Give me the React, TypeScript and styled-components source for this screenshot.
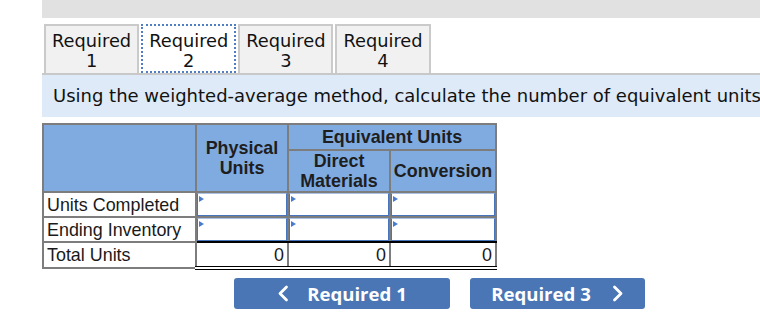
import React from "react";
import styled, { createGlobalStyle, css } from "styled-components";

const GlobalStyle = createGlobalStyle`
  html, body {
    margin: 0;
    padding: 0;
    background: #ffffff;
    overflow: hidden;
  }
`;

const tabs = ["1", "2", "3", "4"];

const rows = [
  { label: "Units Completed", kind: "input" as const },
  { label: "Ending Inventory", kind: "input" as const, beforeTotal: true },
  { label: "Total Units", kind: "total" as const },
];

const ChevronLeft = () => (
  <svg width="12" height="17" viewBox="0 0 12 17">
    <path d="M9.5 2 L3 8.5 L9.5 15" fill="none" stroke="#fff" strokeWidth="2.8" strokeLinecap="round" strokeLinejoin="round" />
  </svg>
);

const ChevronRight = () => (
  <svg width="12" height="17" viewBox="0 0 12 17">
    <path d="M2.5 2 L9 8.5 L2.5 15" fill="none" stroke="#fff" strokeWidth="2.8" strokeLinecap="round" strokeLinejoin="round" />
  </svg>
);

const App = () => {
  return (
    <>
      <GlobalStyle />
      <Page>
        <TopBar />
        <TabList>
          {tabs.map((n) => (
            <Tab key={n} $active={n === "2"}>
              Required
              <br />
              {n}
            </Tab>
          ))}
        </TabList>
        <Instruction>Using the weighted-average method, calculate the number of equivalent units</Instruction>
        <Table>
          <colgroup>
            <col style={{ width: 153 }} />
            <col style={{ width: 92 }} />
            <col style={{ width: 102 }} />
            <col style={{ width: 106 }} />
          </colgroup>
          <thead>
            <tr>
              <HeadCell rowSpan={2} />
              <HeadCell rowSpan={2}>
                Physical
                <br />
                Units
              </HeadCell>
              <HeadCell colSpan={2} $short>
                Equivalent Units
              </HeadCell>
            </tr>
            <tr>
              <HeadCell>
                Direct
                <br />
                Materials
              </HeadCell>
              <HeadCell>Conversion</HeadCell>
            </tr>
          </thead>
          <tbody>
            {rows.map((row) => (
              <tr key={row.label}>
                <LabelCell>{row.label}</LabelCell>
                {[0, 1, 2].map((i) =>
                  row.kind === "input" ? (
                    <InputCell key={i} $beforeTotal={!!row.beforeTotal}>
                      <Entry />
                    </InputCell>
                  ) : (
                    <TotalCell key={i}>0</TotalCell>
                  )
                )}
              </tr>
            ))}
          </tbody>
        </Table>
        <Nav>
          <NavButton $width={216} $gap={18}>
            <ChevronLeft />
            <span>Required 1</span>
          </NavButton>
          <NavButton $width={175} $gap={21}>
            <span>Required 3</span>
            <ChevronRight />
          </NavButton>
        </Nav>
      </Page>
    </>
  );
};

export default App;

const Page = styled.div`
  margin-left: 42px;
  width: 795px;
`;

const TopBar = styled.div`
  height: 18px;
  background: #e1e1e1;
`;

const TabList = styled.div`
  display: flex;
  gap: 2px;
  margin-top: 6px;
  padding-left: 2px;
  border-bottom: 2px solid #c8c8c8;
`;

const Tab = styled.div<{ $active: boolean }>`
  box-sizing: border-box;
  height: 49px;
  padding: 5px 6px 0;
  border: 2px solid #cacaca;
  border-bottom: none;
  background: #f1f1f1;
  font-family: "DejaVu Sans", Verdana, sans-serif;
  font-size: 17.8px;
  line-height: 20px;
  color: #111;
  text-align: center;

  ${(p) =>
    p.$active &&
    css`
      background: #ffffff;
      border: 2px dotted #4f7fc2;
    `}
`;

const Instruction = styled.div`
  height: 42px;
  padding-left: 11px;
  background: #deeaf7;
  font-family: "DejaVu Sans", Verdana, sans-serif;
  font-size: 18px;
  line-height: 42px;
  color: #111;
  white-space: nowrap;
`;

const Table = styled.table`
  margin-top: 6px;
  border-collapse: collapse;
  table-layout: fixed;
  width: 453px;
  border: 2px solid #7d7d7d;
  font-family: "Liberation Sans", Arial, sans-serif;
  font-size: 17.9px;
  color: #1a1a1a;
`;

const HeadCell = styled.th<{ $short?: boolean }>`
  height: ${(p) => (p.$short ? "24px" : "40px")};
  padding: 0;
  border: 2px solid #7d7d7d;
  background: #80abe1;
  font-weight: bold;
  line-height: 20px;
  text-align: center;
  vertical-align: middle;
  color: #1e1e1e;
`;

const LabelCell = styled.td`
  height: 23px;
  padding: 0 0 0 3px;
  border: 2px solid #7d7d7d;
  line-height: 20px;
  white-space: nowrap;
`;

const InputCell = styled.td<{ $beforeTotal: boolean }>`
  height: 23px;
  padding: 0;
  border: 2px solid #7d7d7d;
  ${(p) =>
    p.$beforeTotal &&
    css`
      border-bottom-color: #000;
    `}
`;

const Entry = styled.div`
  position: relative;
  box-sizing: border-box;
  height: 23px;
  border: 1px solid #4675bd;
  border-top-color: #a9c1e3;
  background: #fff;

  &::before {
    content: "";
    position: absolute;
    top: 2px;
    left: 1px;
    border-top: 3px solid transparent;
    border-bottom: 3px solid transparent;
    border-left: 5px solid #4a7ccc;
  }
`;

const TotalCell = styled.td`
  height: 23px;
  padding: 0 3px 0 0;
  border: 2px solid #7d7d7d;
  border-bottom: 4px double #000;
  line-height: 20px;
  text-align: right;
`;

const Nav = styled.div`
  display: flex;
  justify-content: center;
  gap: 20px;
  margin-top: 8px;
`;

const NavButton = styled.button<{ $width: number; $gap: number }>`
  display: flex;
  align-items: center;
  justify-content: center;
  gap: ${(p) => p.$gap}px;
  width: ${(p) => p.$width}px;
  height: 31px;
  padding: 0;
  border: none;
  border-radius: 3px;
  background: #4a76b5;
  color: #fff;
  font-family: "Open Sans", sans-serif;
  font-weight: 700;
  font-size: 18.6px;
`;
